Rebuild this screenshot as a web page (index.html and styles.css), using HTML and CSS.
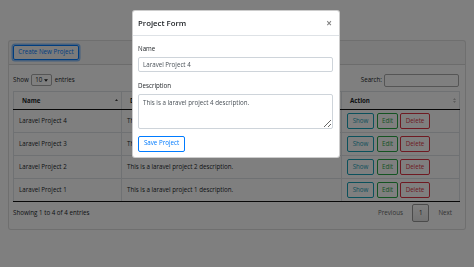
FILE: index.html
```html
<!DOCTYPE html>
<html lang="en">
<head>
<meta charset="utf-8">
<title>Projects</title>
<link rel="stylesheet" href="styles.css">
</head>
<body>
<div class="page">
  <div class="card">
    <div class="card-header">
      <button class="btn btn-create" type="button">Create New Project</button>
    </div>
    <div class="card-body">
      <div class="dt-top">
        <div class="dt-length">
          <span>Show</span>
          <span class="dt-select"><span>10</span><svg class="caret" viewBox="0 0 6 4" width="4" height="3"><path d="M0 0H6L3 4Z" fill="#222"/></svg></span>
          <span>entries</span>
        </div>
        <div class="dt-search">
          <span>Search:</span>
          <span class="dt-input"></span>
        </div>
      </div>
      <table class="dt">
        <colgroup><col class="w-name"><col class="w-desc"><col class="w-act"></colgroup>
        <thead>
          <tr>
            <th><div class="th-in"><span>Name</span><svg class="sort" viewBox="0 0 6 8" width="3" height="4"><path d="M0 6L3 2L6 6Z" fill="#444"/></svg></div></th>
            <th><div class="th-in"><span>Description</span><svg class="sort faint" viewBox="0 0 6 10" width="3" height="5"><path d="M0 4L3 0L6 4Z M0 6L3 10L6 6Z" fill="#bbb"/></svg></div></th>
            <th><div class="th-in"><span>Action</span><svg class="sort faint" viewBox="0 0 6 10" width="3" height="5"><path d="M0 4L3 0L6 4Z M0 6L3 10L6 6Z" fill="#bbb"/></svg></div></th>
          </tr>
        </thead>
        <tbody>
          <tr>
            <td>Laravel Project 4</td>
            <td>This is a laravel project 4 description.</td>
            <td><div class="acts"><button class="btn b-show" type="button">Show</button><button class="btn b-edit" type="button">Edit</button><button class="btn b-del" type="button">Delete</button></div></td>
          </tr>
          <tr>
            <td>Laravel Project 3</td>
            <td>This is a laravel project 3 description.</td>
            <td><div class="acts"><button class="btn b-show" type="button">Show</button><button class="btn b-edit" type="button">Edit</button><button class="btn b-del" type="button">Delete</button></div></td>
          </tr>
          <tr>
            <td>Laravel Project 2</td>
            <td>This is a laravel project 2 description.</td>
            <td><div class="acts"><button class="btn b-show" type="button">Show</button><button class="btn b-edit" type="button">Edit</button><button class="btn b-del" type="button">Delete</button></div></td>
          </tr>
          <tr class="last">
            <td>Laravel Project 1</td>
            <td>This is a laravel project 1 description.</td>
            <td><div class="acts"><button class="btn b-show" type="button">Show</button><button class="btn b-edit" type="button">Edit</button><button class="btn b-del" type="button">Delete</button></div></td>
          </tr>
        </tbody>
      </table>
      <div class="dt-bottom">
        <div class="dt-info">Showing 1 to 4 of 4 entries</div>
        <div class="dt-pages">
          <span class="pg disabled">Previous</span>
          <span class="pg current">1</span>
          <span class="pg disabled">Next</span>
        </div>
      </div>
    </div>
  </div>
</div>

<div class="backdrop"></div>

<div class="modal">
  <div class="modal-header">
    <span class="modal-title">Project Form</span>
    <span class="close">&times;</span>
  </div>
  <div class="modal-body">
    <div class="form-group">
      <label class="lbl">Name</label>
      <div class="input">Laravel Project 4</div>
    </div>
    <div class="form-group">
      <label class="lbl">Description</label>
      <textarea class="textarea">This is a laravel project 4 description.</textarea>
    </div>
    <button class="btn btn-save" type="button">Save Project</button>
  </div>
</div>
</body>
</html>
```

FILE: styles.css
```css
* { box-sizing: border-box; }
html, body { margin: 0; padding: 0; }
body {
  width: 474px;
  height: 267px;
  overflow: hidden;
  background: #fff;
  color: #212529;
  font-family: "Open Sans", "Noto Sans", sans-serif;
  font-size: 6.2px;
  line-height: 1.5;
}
.page { padding: 40px 8px 0 8px; }
.card {
  border: 1px solid rgba(0,0,0,.125);
  border-radius: 3px;
  background: #fff;
}
.card-header {
  display: flex;
  padding: 4px;
  background: rgba(0,0,0,.03);
  border-bottom: 1px solid rgba(0,0,0,.125);
}
.btn {
  font-family: inherit;
  font-size: 6.2px;
  line-height: 1;
  margin: 0;
  background: transparent;
  border: 1px solid;
  border-radius: 2px;
  display: inline-flex;
  align-items: center;
  justify-content: center;
  padding: 0;
}
.btn-create {
  width: 66px;
  height: 15px;
  color: #007bff;
  border-color: #007bff;
  box-shadow: 0 0 0 1.5px rgba(0,123,255,.45);
}
.card-body { padding: 8px 6px 7px 4px; }
.dt-top {
  display: flex;
  justify-content: space-between;
  align-items: center;
  height: 14px;
}
.dt-length { display: flex; align-items: center; gap: 2.5px; }
.dt-select {
  display: inline-flex;
  align-items: center;
  justify-content: space-between;
  width: 21px;
  height: 12px;
  padding: 0 3px 0 3px;
  border: 1px solid #aaa;
  border-radius: 2px;
}
.dt-search { display: flex; align-items: center; gap: 2px; }
.dt-input {
  width: 75px;
  height: 13px;
  border: 1px solid #aaa;
  border-radius: 2px;
}
table.dt {
  margin-top: 4px;
  width: 100%;
  border-collapse: collapse;
  table-layout: fixed;
}
.w-name { width: 108px; }
.w-desc { width: 220px; }
.w-act { width: 118px; }
table.dt th, table.dt td {
  border: 1px solid #dee2e6;
  text-align: left;
}
table.dt th {
  height: 18px;
  padding: 0 3px 0 8px;
  font-weight: 700;
  border-bottom: 1px solid #111;
}
.th-in {
  display: flex;
  align-items: center;
  justify-content: space-between;
}
table.dt td {
  height: 23px;
  padding: 0 5px;
  vertical-align: middle;
}
table.dt tr.last td { border-bottom: 1px solid #111; }
.acts { display: flex; align-items: center; }
.acts .btn { height: 16px; }
.b-show { width: 27px; color: #17a2b8; border-color: #17a2b8; }
.b-edit { width: 21px; margin-left: 3px; color: #28a745; border-color: #28a745; }
.b-del { width: 30px; margin-left: 2px; color: #dc3545; border-color: #dc3545; }
.dt-bottom {
  margin-top: 2px;
  height: 18px;
  display: flex;
  justify-content: space-between;
  align-items: center;
}
.dt-pages { display: flex; align-items: center; }
.pg {
  height: 18px;
  padding: 0 6px;
  margin-left: 2px;
  border: 1px solid transparent;
  border-radius: 2px;
  display: inline-flex;
  align-items: center;
}
.pg.disabled { color: #666; }
.pg.current {
  color: #333;
  border-color: #979797;
  background: linear-gradient(to bottom, #fff 0%, #e6e6e6 100%);
}
.backdrop {
  position: fixed;
  inset: 0;
  background: rgba(0,0,0,.5);
}
.modal {
  position: fixed;
  left: 132px;
  top: 10px;
  width: 208px;
  background: #fff;
  border: 1px solid rgba(0,0,0,.2);
  border-radius: 3px;
}
.modal-header {
  display: flex;
  justify-content: space-between;
  align-items: center;
  padding: 6.5px 7px 6.5px 5px;
  border-bottom: 1px solid #dee2e6;
}
.modal-title {
  font-size: 7.8px;
  font-weight: 600;
  line-height: 11px;
}
.close {
  font-size: 10px;
  line-height: 11px;
  font-weight: 700;
  color: #000;
  opacity: .5;
}
.modal-body { padding: 8px 6px 5px 5px; }
.form-group { margin-bottom: 9px; }
.lbl { display: block; margin-bottom: 3.5px; line-height: 9.5px; }
.input {
  height: 15px;
  padding: 0 4px;
  border: 1px solid #ced4da;
  border-radius: 2px;
  color: #495057;
  display: flex;
  align-items: center;
}
.textarea {
  display: block;
  width: 100%;
  height: 35px;
  margin: 0;
  padding: 3px 4px;
  font-family: inherit;
  font-size: 6.2px;
  line-height: 1.5;
  color: #495057;
  border: 1px solid #ced4da;
  border-radius: 2px;
  resize: vertical;
}
.form-group:last-of-type { margin-bottom: 6.5px; }
.btn-save {
  width: 47px;
  height: 16px;
  color: #007bff;
  border-color: #007bff;
}
```
